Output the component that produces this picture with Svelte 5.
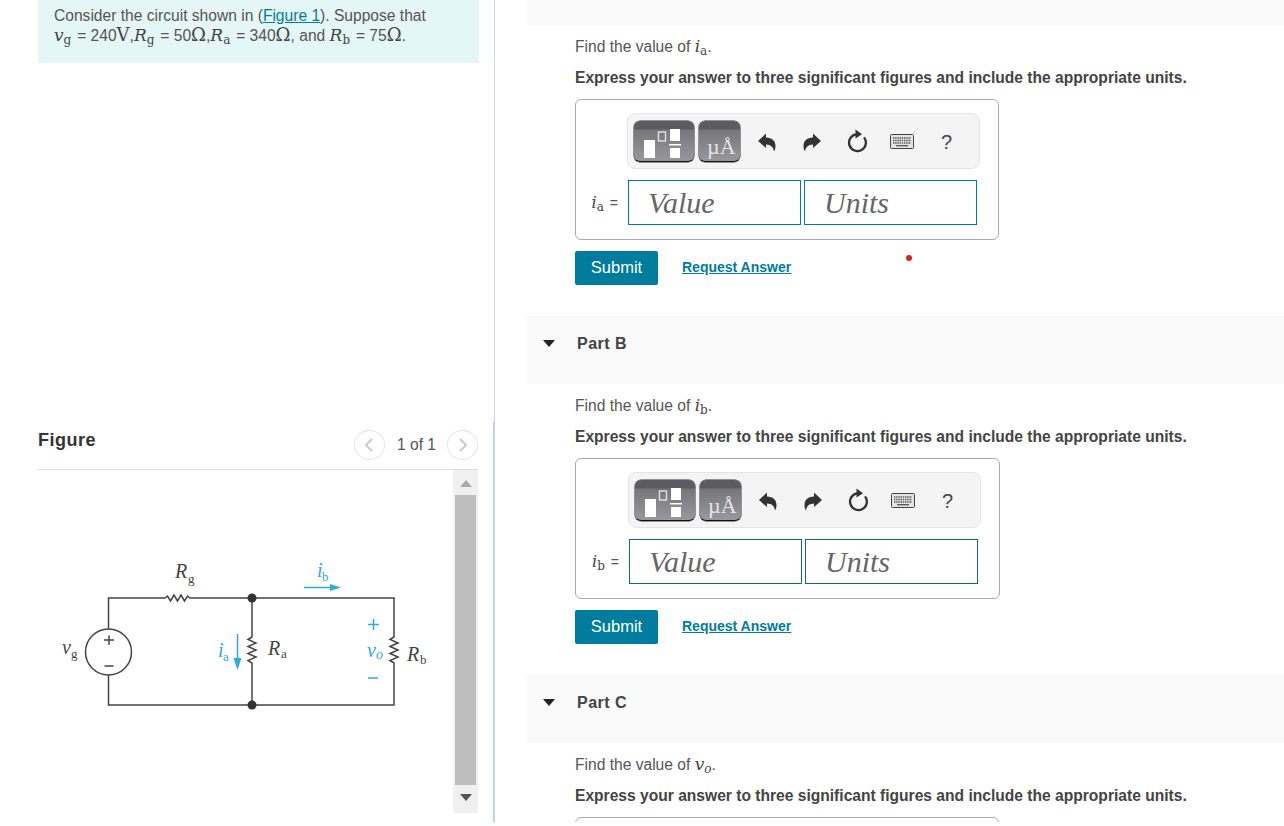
<script>
  const parts = [
    { name: null, sub: 'a', v: 'i', alt: false },
    { name: 'Part B', sub: 'b', v: 'i', alt: true }
  ];
</script>

{#snippet undoIcon(flip)}
  <svg class:flip class="undo" width="18" height="19" viewBox="0 0 18 19">
    <path d="M0 8 L8 0.5 V4.5 C14 4.5 17.5 8 17.5 13 C17.5 15 17 17 16 18.5 C15.5 14.5 13 11.5 8 11.5 V15 Z" fill="#333" />
  </svg>
{/snippet}

{#snippet toolbar()}
  <div class="toolbar">
    <div class="tpl wide">
      <svg width="60" height="41" viewBox="0 0 60 41">
        <rect x="10" y="19" width="11" height="18" fill="#fff" />
        <rect x="24.5" y="11" width="7" height="9" fill="none" stroke="#ddd" stroke-width="1.5" />
        <rect x="36" y="8" width="10" height="12" fill="#fff" />
        <rect x="35" y="23" width="12" height="1.5" fill="#fff" />
        <rect x="36" y="27" width="10" height="10" fill="#fff" />
      </svg>
    </div>
    <div class="tpl narrow"><span class="mu">µÅ</span></div>
    <div class="tool">{@render undoIcon(false)}</div>
    <div class="tool">{@render undoIcon(true)}</div>
    <div class="tool">
      <svg width="22" height="24" viewBox="0 0 22 24">
        <path d="M10 5.4 A8.4 8.4 0 1 0 18 8.4" fill="none" stroke="#333" stroke-width="2.3" />
        <path d="M9.5 0.5 L16 5.2 L9.5 9.5 Z" fill="#333" />
      </svg>
    </div>
    <div class="tool">
      <svg width="24" height="15" viewBox="0 0 24 15">
        <rect x=".5" y=".5" width="23" height="14" rx="1" fill="#e4e4e4" stroke="#444" />
        <path d="M3 4 H21 M3 6.5 H21 M3 9 H21" stroke="#555" stroke-width="1.3" stroke-dasharray="1.4 .8" />
        <path d="M6 11.7 H18" stroke="#555" stroke-width="1.3" />
      </svg>
    </div>
    <div class="tool help">?</div>
  </div>
{/snippet}

{#snippet partBody(part)}
  <div class="part-body">
    <p class="find">Find the value of <span class="m">{part.v}<sub>{part.sub}</sub></span>.</p>
    <p class="express">Express your answer to three significant figures and include the appropriate units.</p>
    <div class="answer" class:alt={part.alt}>
      {@render toolbar()}
      <div class="inputs">
        <span class="lhs"><span class="m">{part.v}<sub>{part.sub}</sub></span> =</span>
        <div class="field">Value</div>
        <div class="field">Units</div>
      </div>
    </div>
    <div class="actions">
      <button class="submit">Submit</button>
      <a class="request" href="#top">Request Answer</a>
      {#if !part.alt}<span class="dot"></span>{/if}
    </div>
  </div>
{/snippet}

{#snippet band(name)}
  <div class="band"><span class="caret"></span><span class="band-title">{name}</span></div>
{/snippet}

<div class="page">
  <div class="left">
    <div class="problem">
      Consider the circuit shown in (<a href="#top">Figure 1</a>). Suppose that<br />
      <span class="m">v<sub>g</sub></span> = 240<span class="u">V</span>,<span class="m">R<sub>g</sub></span> = 50<span class="u">Ω</span>,<span class="m">R<sub>a</sub></span> = 340<span class="u">Ω</span>, and <span class="m">R<sub>b</sub></span> = 75<span class="u">Ω</span>.
    </div>

    <div class="figure">
      <div class="figure-head">
        <span class="figure-title">Figure</span>
        <div class="pager">
          <span class="round"><svg width="10" height="16" viewBox="0 0 10 16"><path d="M8 2 L2 8 L8 14" fill="none" stroke="#ccc" stroke-width="2" /></svg></span>
          <span class="count">1 of 1</span>
          <span class="round"><svg width="10" height="16" viewBox="0 0 10 16"><path d="M2 2 L8 8 L2 14" fill="none" stroke="#ccc" stroke-width="2" /></svg></span>
        </div>
      </div>
      <div class="viewer">
        <svg class="circuit" width="417" height="343" viewBox="38 470 417 343">
          <g fill="none" stroke="#444" stroke-width="1.5">
            <path d="M108.5 629 V598 H165 l2.5 -2 l3 5 l3.5 -6 l3.5 6 l3.5 -6 l3.5 6 l3 -5 l2.5 2 H394 V637 l-4 2.5 l8 3.5 l-8 3.5 l8 3.5 l-8 3.5 l8 3.5 l-8 3.5 l4 2.5 V705 H108.5 V675" />
            <path d="M252 598 V637 l-4 2.5 l8 3.5 l-8 3.5 l8 3.5 l-8 3.5 l8 3.5 l-8 3.5 l4 2.5 V705" />
            <circle cx="108.5" cy="652" r="23" />
            <path d="M104 640 H114 M109 635.5 V645 M104.5 666 H113.5" />
          </g>
          <circle cx="252" cy="598" r="4.5" fill="#333" />
          <circle cx="252" cy="705" r="4.5" fill="#333" />
          <g fill="none" stroke="#29abe2" stroke-width="1.5">
            <path d="M304 587.5 H332" />
            <path d="M237.5 634 V660" />
            <path d="M368 624.5 H379 M373.5 619 V630 M368 678 H378" />
          </g>
          <path d="M330 584 L341 587.5 L330 591 Z M233.5 658 H241.5 L237.5 670 Z" fill="#29abe2" />
          <g class="lab">
            <text x="175" y="578" class="it">R</text><text x="188" y="583" class="sb">g</text>
            <text x="268" y="655" class="it">R</text><text x="281" y="658" class="sb">a</text>
            <text x="407" y="661" class="it">R</text><text x="420" y="664" class="sb">b</text>
            <text x="62" y="654" class="it">v</text><text x="71" y="658" class="sb">g</text>
          </g>
          <g class="lab cy">
            <text x="317" y="577" class="it">i</text><text x="322" y="581" class="sb">b</text>
            <text x="218" y="657" class="it">i</text><text x="223" y="661" class="sb">a</text>
            <text x="367" y="657" class="it">v</text><text x="376" y="659" class="it small">o</text>
          </g>
        </svg>
        <div class="scrollbar">
          <span class="arrow up"></span>
          <span class="thumb"></span>
          <span class="arrow down"></span>
        </div>
      </div>
    </div>
  </div>

  <div class="right">
    <div class="top-strip"></div>
    {@render partBody(parts[0])}
    {@render band('Part B')}
    {@render partBody(parts[1])}
    {@render band('Part C')}
    <div class="part-body">
      <p class="find">Find the value of <span class="m">v<sub class="o">o</sub></span>.</p>
      <p class="express">Express your answer to three significant figures and include the appropriate units.</p>
      <div class="answer cut"></div>
    </div>
  </div>
</div>

<style>
  :global(body) {
    margin: 0;
    background: #fff;
  }

  .page {
    display: flex;
    width: 1284px;
    height: 822px;
    overflow: hidden;
    font-family: "Liberation Sans", Arial, sans-serif;
    font-size: 15.6px;
    line-height: 20px;
    color: #555;
  }

  .left {
    flex: none;
    width: 494px;
    border-right: 1px solid #c9d9e8;
  }

  .problem {
    box-sizing: border-box;
    width: 441px;
    height: 63px;
    margin-left: 38px;
    padding: 6px 16px 0;
    background: #e5f6f6;
  }

  .problem a {
    color: #007c9e;
    text-decoration: underline;
  }

  .problem .m {
    margin-right: 1.5px;
  }

  .m {
    font-family: "DejaVu Serif", serif;
    font-style: italic;
    font-size: 17px;
    line-height: 1;
    color: #444;
  }

  .m sub {
    font-family: "DejaVu Serif", serif;
    font-style: normal;
    font-size: 12px;
    line-height: 0;
    vertical-align: -3px;
  }

  .m sub.o {
    font-style: italic;
  }

  .u {
    font-family: "DejaVu Serif", serif;
    font-size: 18px;
    line-height: 1;
    color: #444;
  }

  .figure {
    box-sizing: border-box;
    width: 456px;
    height: 400px;
    margin: 359px 0 0 38px;
    border-right: 1px solid #b9cde0;
  }

  .figure-head {
    display: flex;
    align-items: center;
    justify-content: space-between;
    box-sizing: border-box;
    width: 440px;
    height: 48px;
    padding-bottom: 11px;
    border-bottom: 1px solid #ddd;
  }

  .figure-title {
    font-size: 18px;
    font-weight: bold;
    letter-spacing: 0.5px;
    color: #333;
  }

  .pager {
    display: flex;
    align-items: center;
    gap: 11px;
    padding-top: 10px;
  }

  .round {
    display: flex;
    align-items: center;
    justify-content: center;
    box-sizing: border-box;
    width: 31px;
    height: 30px;
    border: 1px solid #e4e4e4;
    border-radius: 50%;
  }

  .count {
    margin-left: 1px;
    color: #555;
  }

  .viewer {
    display: flex;
    width: 440px;
    height: 343px;
  }

  .circuit {
    flex: none;
    margin-right: -2px;
    width: 417px;
  }

  .lab text {
    font-family: "Liberation Serif", serif;
    fill: #444;
  }

  .lab.cy text {
    fill: #29abe2;
  }

  .it {
    font-style: italic;
    font-size: 20px;
  }

  .it.small {
    font-size: 14px;
  }

  .sb {
    font-size: 13px;
  }

  .scrollbar {
    display: flex;
    flex-direction: column;
    align-items: center;
    flex: none;
    width: 25px;
    height: 343px;
    background: #f0f0f0;
  }

  .thumb {
    width: 21px;
    height: 290px;
    background: #bebebe;
  }

  .arrow {
    width: 0;
    height: 0;
    border-left: 6px solid transparent;
    border-right: 6px solid transparent;
  }

  .arrow.up {
    margin: 10px 0 8px;
    border-bottom: 7px solid #aaa;
  }

  .arrow.down {
    margin-top: 9px;
    border-top: 7px solid #555;
  }

  .right {
    flex: none;
    margin-left: 32px;
    width: 757px;
  }

  .top-strip {
    height: 25px;
    background: #f9f9f9;
  }

  .part-body {
    padding: 12px 0 31px 48px;
  }

  .find {
    margin: 0;
    color: #555;
  }

  .express {
    margin: 11px 0 0;
    font-weight: bold;
    color: #444;
  }

  .answer {
    box-sizing: border-box;
    width: 424px;
    height: 141px;
    margin-top: 11px;
    padding: 13px 0 0 51px;
    border: 1px solid #aaa;
    border-radius: 6px;
  }

  .answer.alt {
    width: 425px;
    padding-left: 52px;
  }

  .answer.cut {
    height: 20px;
  }

  .toolbar {
    display: flex;
    align-items: center;
    box-sizing: border-box;
    width: 353px;
    height: 56px;
    padding-left: 6px;
    background: #f4f4f4;
    border: 1px solid #e4e4e4;
    border-radius: 8px;
  }

  .tpl {
    position: relative;
    box-sizing: border-box;
    height: 41px;
    border-bottom: 1px solid #111;
    border-radius: 6px;
    background: linear-gradient(#5c5c60 0, #5c5c60 8px, #77767b 9px, #98979d 100%);
    box-shadow: 0 0 0 0.5px #333;
    overflow: hidden;
  }

  .tpl.wide {
    width: 60px;
    margin-right: 5px;
  }

  .tpl.narrow {
    width: 41px;
    margin-right: 4px;
  }

  .tpl svg {
    display: block;
  }

  .mu {
    position: absolute;
    left: 8px;
    bottom: 3px;
    font-family: "Liberation Serif", serif;
    font-size: 22px;
    line-height: 22px;
    color: #e6e6e6;
  }

  .tool {
    display: flex;
    align-items: center;
    justify-content: center;
    width: 45px;
    height: 40px;
  }

  .undo {
    margin-top: 2px;
  }

  .flip {
    transform: scaleX(-1);
  }

  .help {
    padding-top: 1px;
    font-size: 20px;
    color: #444;
  }

  .inputs {
    display: flex;
    align-items: center;
    gap: 3px;
    margin-top: 11px;
  }

  .lhs {
    display: flex;
    align-items: baseline;
    gap: 6px;
    justify-content: flex-end;
    width: 0;
    margin: 0 7px 0 -9px;
    white-space: nowrap;
    font-size: 14px;
    color: #555;
  }

  .lhs .m {
    font-size: 16px;
  }

  .field {
    box-sizing: border-box;
    width: 173px;
    height: 45px;
    padding-left: 19px;
    border: 1px solid #007c9e;
    font-family: "Liberation Serif", serif;
    font-style: italic;
    font-size: 30px;
    line-height: 43px;
    color: #666;
  }

  .alt .field {
    border-color: #14667f;
  }

  .actions {
    position: relative;
    display: flex;
    align-items: center;
    margin-top: 11px;
  }

  .submit {
    width: 83px;
    height: 34px;
    padding: 0 0 2px;
    border: none;
    border-radius: 2px;
    background: #007c9e;
    font-family: inherit;
    font-size: 16.5px;
    color: #fff;
  }

  .request {
    margin: 0 0 3px 24px;
    font-size: 14px;
    font-weight: bold;
    color: #007c9e;
    text-decoration: underline;
  }

  .dot {
    position: absolute;
    left: 331px;
    top: 4px;
    width: 6px;
    height: 6px;
    border-radius: 50%;
    background: #d9201f;
  }

  .band {
    display: flex;
    align-items: center;
    height: 68px;
    padding-bottom: 13px;
    box-sizing: border-box;
    background: #f9f9f9;
  }

  .caret {
    width: 0;
    height: 0;
    margin: 0 22px 0 16px;
    border-left: 6.5px solid transparent;
    border-right: 6.5px solid transparent;
    border-top: 7px solid #222;
  }

  .band-title {
    font-size: 16px;
    letter-spacing: 0.5px;
    font-weight: bold;
    color: #444;
  }
</style>
